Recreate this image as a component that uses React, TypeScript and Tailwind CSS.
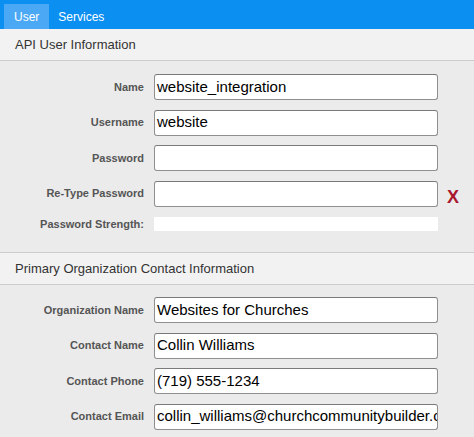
import React from "react";

const font = { fontFamily: '"Liberation Sans", Arial, Helvetica, sans-serif' };

function Row({ label, value, x }: { label: string; value: string; x?: boolean }) {
  return (
    <div className="flex h-[26px] items-center">
      <div className="w-[144px] shrink-0 text-right text-[11px] font-bold text-[#555555]">{label}</div>
      <div className="ml-[10px] flex h-[26px] w-[284px] shrink-0 items-center overflow-hidden whitespace-nowrap rounded-[3px] border border-[#8f8f8f] border-t-[#7a7a7a] bg-white pl-[2px] text-[15px] text-black">
        {value}
      </div>
      {x && <div className="ml-[9px] mt-[6px] text-[18px] font-bold leading-none text-[#a8172e]">X</div>}
    </div>
  );
}

export default function App() {
  return (
    <div className="h-[437px] w-[474px] overflow-hidden bg-[#ebebeb]" style={font}>
      <div className="flex h-[29px] items-end bg-[#0b8ff0] pl-[4px]">
        <div className="flex h-[25px] items-center bg-[#4aa8f5] px-[10px] text-[12px] text-white">User</div>
        <div className="flex h-[25px] items-center px-[9px] text-[12px] text-white">Services</div>
      </div>
      <div className="flex h-[32px] items-center border-b border-[#cccccc] bg-[#f2f2f2] pl-[15px] text-[13px] text-[#333333]">
        API User Information
      </div>
      <div className="flex h-[192px] flex-col gap-[9.5px] border-b border-[#cccccc] pt-[13px]">
        <Row label="Name" value="website_integration" />
        <Row label="Username" value="website" />
        <Row label="Password" value="" />
        <Row label="Re-Type Password" value="" x />
        <div className="mt-[1px] flex h-[14px] items-center">
          <div className="w-[144px] shrink-0 text-right text-[11px] font-bold text-[#555555]">Password Strength:</div>
          <div className="ml-[10px] h-[14px] w-[284px] bg-white" />
        </div>
      </div>
      <div className="flex h-[32px] items-center border-b border-[#cccccc] bg-[#f2f2f2] pl-[15px] text-[13px] text-[#333333]">
        Primary Organization Contact Information
      </div>
      <div className="flex flex-col gap-[9.5px] pt-[12px]">
        <Row label="Organization Name" value="Websites for Churches" />
        <Row label="Contact Name" value="Collin Williams" />
        <Row label="Contact Phone" value="(719) 555-1234" />
        <Row label="Contact Email" value="collin_williams@churchcommunitybuilder.com" />
      </div>
    </div>
  );
}
